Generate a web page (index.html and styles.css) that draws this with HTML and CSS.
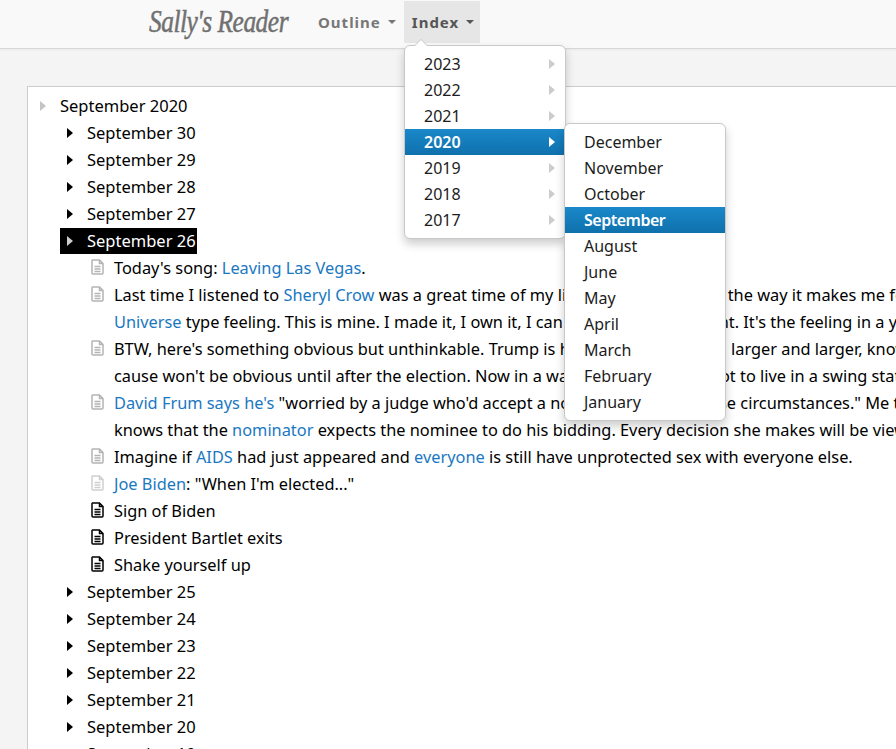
FILE: index.html
```html
<!DOCTYPE html>
<html lang="en">
<head>
<meta charset="utf-8">
<title>Sally's Reader</title>
<link rel="stylesheet" href="styles.css">
</head>
<body>
<svg class="defs" width="0" height="0" aria-hidden="true">
  <symbol id="tri" viewBox="0 0 7 11" preserveAspectRatio="none"><path d="M0 0 L7 5.5 L0 11 Z"/></symbol>
  <symbol id="doc" viewBox="0 0 13 16"><path d="M1.5 1 H8.5 L12 4.5 V14 a1 1 0 0 1 -1 1 H2 a1 1 0 0 1 -1 -1 V1.5 Z M8.5 1 V4.5 H12 M3.5 7.5 H9.5 M3.5 10 H9.5 M3.5 12.5 H9.5" fill="none" stroke="currentColor" stroke-width="1.5"/></symbol>
</svg>
<header class="navbar">
  <span class="brand">Sally's Reader</span>
  <nav class="nav">
    <span class="nav-item">Outline<i class="caret"></i></span>
    <span class="nav-item active">Index<i class="caret"></i></span>
  </nav>
</header>

<ul class="menu years">
  <li>2023<svg class="arrow"><use href="#tri"/></svg></li>
  <li>2022<svg class="arrow"><use href="#tri"/></svg></li>
  <li>2021<svg class="arrow"><use href="#tri"/></svg></li>
  <li class="on">2020<svg class="arrow"><use href="#tri"/></svg></li>
  <li>2019<svg class="arrow"><use href="#tri"/></svg></li>
  <li>2018<svg class="arrow"><use href="#tri"/></svg></li>
  <li>2017<svg class="arrow"><use href="#tri"/></svg></li>
</ul>
<ul class="menu months">
  <li>December</li><li>November</li><li>October</li><li class="on">September</li><li>August</li><li>June</li><li>May</li><li>April</li><li>March</li><li>February</li><li>January</li>
</ul>

<main class="page">
  <section class="outline">
    <div class="row"><span class="head"><svg class="tw gray"><use href="#tri"/></svg>September 2020</span></div>
    <div class="kids">
      <div class="row"><span class="head"><svg class="tw"><use href="#tri"/></svg>September 30</span></div>
      <div class="row"><span class="head"><svg class="tw"><use href="#tri"/></svg>September 29</span></div>
      <div class="row"><span class="head"><svg class="tw"><use href="#tri"/></svg>September 28</span></div>
      <div class="row"><span class="head"><svg class="tw"><use href="#tri"/></svg>September 27</span></div>
      <div class="row"><span class="head sel"><svg class="tw"><use href="#tri"/></svg>September 26</span></div>
      <div class="kids">
        <div class="item"><svg class="ic read"><use href="#doc"/></svg><div><p>Today's song: <a>Leaving Las Vegas</a>.</p></div></div>
        <div class="item"><svg class="ic read"><use href="#doc"/></svg><div>
          <p>Last time I listened to <a>Sheryl Crow</a> was a great time of my life. I love it, and I like the way it makes me feel,</p>
          <p><a>Universe</a> type feeling. This is mine. I made it, I own it, I can make it what we want. It's the feeling in a young</p>
        </div></div>
        <div class="item"><svg class="ic read"><use href="#doc"/></svg><div>
          <p>BTW, here's something obvious but unthinkable. Trump is holding bigger rallies, larger and larger, knowing</p>
          <p>cause won't be obvious until after the election. Now in a way I'm so, very glad not to live in a swing state</p>
        </div></div>
        <div class="item"><svg class="ic read"><use href="#doc"/></svg><div>
          <p><a>David Frum says he's</a> "worried by a judge who'd accept a nomination under these circumstances." Me too</p>
          <p>knows that the <a>nominator</a> expects the nominee to do his bidding. Every decision she makes will be viewed</p>
        </div></div>
        <div class="item"><svg class="ic read"><use href="#doc"/></svg><div><p>Imagine if <a>AIDS</a> had just appeared and <a>everyone</a> is still have unprotected sex with everyone else.</p></div></div>
        <div class="item"><svg class="ic faint"><use href="#doc"/></svg><div><p><a>Joe Biden</a>: "When I'm elected..."</p></div></div>
        <div class="item"><svg class="ic"><use href="#doc"/></svg><div><p>Sign of Biden</p></div></div>
        <div class="item"><svg class="ic"><use href="#doc"/></svg><div><p>President Bartlet exits</p></div></div>
        <div class="item"><svg class="ic"><use href="#doc"/></svg><div><p>Shake yourself up</p></div></div>
      </div>
      <div class="row"><span class="head"><svg class="tw"><use href="#tri"/></svg>September 25</span></div>
      <div class="row"><span class="head"><svg class="tw"><use href="#tri"/></svg>September 24</span></div>
      <div class="row"><span class="head"><svg class="tw"><use href="#tri"/></svg>September 23</span></div>
      <div class="row"><span class="head"><svg class="tw"><use href="#tri"/></svg>September 22</span></div>
      <div class="row"><span class="head"><svg class="tw"><use href="#tri"/></svg>September 21</span></div>
      <div class="row"><span class="head"><svg class="tw"><use href="#tri"/></svg>September 20</span></div>
      <div class="row"><span class="head"><svg class="tw"><use href="#tri"/></svg>September 19</span></div>
    </div>
  </section>
</main>
</body>
</html>
```
FILE: styles.css
```css
* { box-sizing: border-box; }
html, body { margin: 0; height: 100%; overflow: hidden; }
body { background: #f4f4f4; color: #000; font-family: "Noto Sans", "Liberation Sans", sans-serif; font-size: 16.5px; position: relative; }
.defs { position: absolute; }

.navbar { height: 49px; background: #f9f9f9; border-bottom: 1px solid #d8d8d8; display: flex; padding-left: 149px; box-shadow: 0 1px 2px rgba(0,0,0,.05); }
.brand { font-family: "Liberation Serif", serif; font-style: italic; font-size: 31px; letter-spacing: -.6px; -webkit-text-stroke: .5px #707070; line-height: 44px; color: #707070; width: 161px; white-space: nowrap; transform: scaleX(.82); transform-origin: left center; }
.nav { display: flex; padding-top: 1px; }
.nav-item { height: 42px; padding: 0 8px; font-weight: 700; font-size: 15px; letter-spacing: 1px; color: #777; display: flex; align-items: center; }
.nav-item.active { background: #e6e6e6; color: #555; padding-right: 6px; }
.caret { display: block; width: 0; height: 0; border-left: 4px solid transparent; border-right: 4px solid transparent; border-top: 4px solid currentColor; margin-left: 7px; }

.menu { position: absolute; margin: 0; padding: 5px 0; list-style: none; width: 162px; background: #fff; border: 1px solid #c8c8c8; border-radius: 6px; box-shadow: 0 5px 10px rgba(0,0,0,.2); z-index: 5; font-size: 16px; }
.menu li { height: 26px; line-height: 26px; padding-left: 19px; position: relative; color: #1c1c1c; }
.menu li.on { background: linear-gradient(#1a88ca, #0f71ac); color: #fff; font-weight: 600; }
.months li.on { letter-spacing: -.5px; }
.years { left: 404px; top: 45px; }
.years::before { content: ""; position: absolute; left: 9px; top: -7px; border-left: 7px solid transparent; border-right: 7px solid transparent; border-bottom: 7px solid #c8c8c8; }
.years::after { content: ""; position: absolute; left: 10px; top: -6px; border-left: 6px solid transparent; border-right: 6px solid transparent; border-bottom: 6px solid #fff; }
.months { left: 564px; top: 123px; z-index: 6; }
.arrow { position: absolute; right: 10px; top: 8px; width: 6px; height: 10px; fill: #ccc; }
.on .arrow { fill: #fff; }

.page { padding: 37px 0 0 27px; }
.outline { width: 1200px; background: #fff; border: 1px solid #ccc; padding: 6px 0 0 32px; min-height: 800px; }
.row { height: 27px; white-space: nowrap; }
.head { display: inline-flex; align-items: center; height: 26px; line-height: 26px; padding-right: 1px; margin-left: -27px; }
.tw { width: 6px; height: 10px; margin: 0 14px 0 7px; fill: #000; flex: none; }
.tw.gray { fill: #c4c4c4; }
.sel { background: #000; color: #fff; }
.sel .tw { fill: #ccc; }
.kids { padding-left: 27px; }
.item { display: flex; }
.item p { margin: 0; height: 27px; line-height: 26px; white-space: nowrap; font-size: 16.35px; }
.ic { width: 13px; height: 16px; margin: 4px 10px 0 -23px; color: #000; flex: none; }
.ic.read { color: #b4b4b4; }
.ic.faint { color: #cfcfcf; }
a { color: #1a78c2; }
```
